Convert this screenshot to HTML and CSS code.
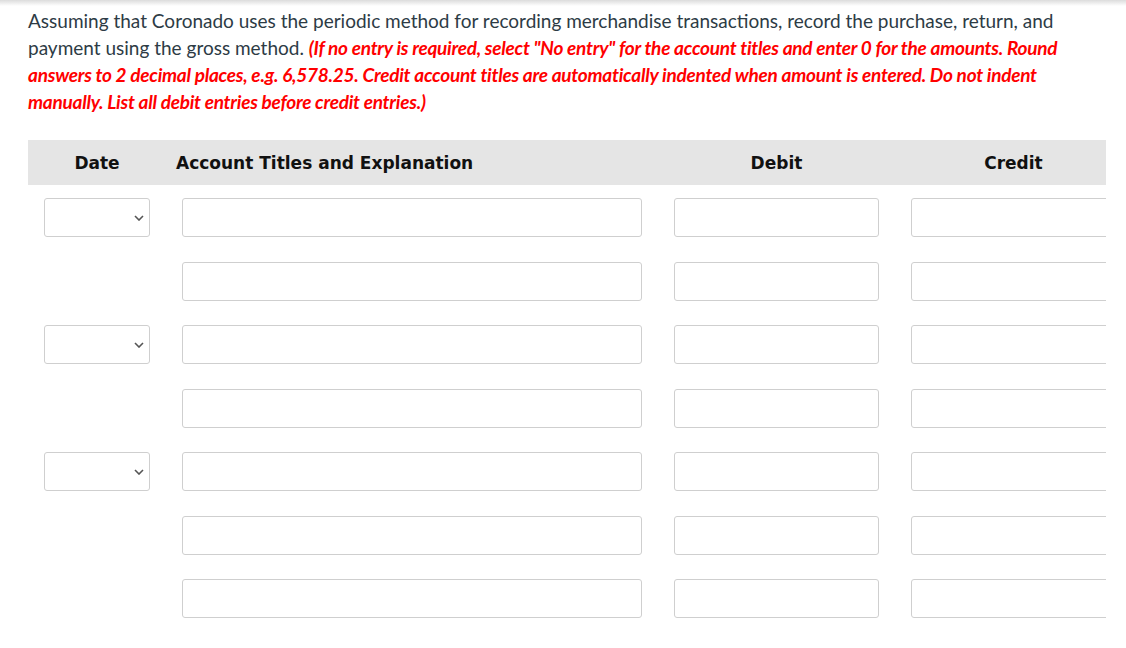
FILE: index.html
```html
<!DOCTYPE html>
<html>
<head>
<meta charset="utf-8">
<link rel="stylesheet" href="styles.css">
</head>
<body>
<div class="topshade"></div>
<div class="page">
  <p class="question">Assuming that Coronado uses the periodic method for recording merchandise transactions, record the purchase, return, and<br>payment using the gross method. <span class="note">(If no entry is required, select "No entry" for the account titles and enter 0 for the amounts. Round<br>answers to 2 decimal places, e.g. 6,578.25. Credit account titles are automatically indented when amount is entered. Do not indent<br>manually. List all debit entries before credit entries.)</span></p>
  <div class="tablewrap">
    <div class="table">
      <div class="row head">
        <div class="c date">Date</div>
        <div class="c acct">Account Titles and Explanation</div>
        <div class="c amt">Debit</div>
        <div class="c amt">Credit</div>
      </div>
      <div class="row">
        <div class="c date"><div class="sel"><svg class="chev" viewBox="0 0 10 6"><path d="M1 1 L5 5 L9 1" fill="none" stroke="#555" stroke-width="1.6"/></svg></div></div>
        <div class="c acct"><div class="inp"></div></div>
        <div class="c amt"><div class="inp"></div></div>
        <div class="c amt"><div class="inp"></div></div>
      </div>
      <div class="row">
        <div class="c date"></div>
        <div class="c acct"><div class="inp"></div></div>
        <div class="c amt"><div class="inp"></div></div>
        <div class="c amt"><div class="inp"></div></div>
      </div>
      <div class="row">
        <div class="c date"><div class="sel"><svg class="chev" viewBox="0 0 10 6"><path d="M1 1 L5 5 L9 1" fill="none" stroke="#555" stroke-width="1.6"/></svg></div></div>
        <div class="c acct"><div class="inp"></div></div>
        <div class="c amt"><div class="inp"></div></div>
        <div class="c amt"><div class="inp"></div></div>
      </div>
      <div class="row">
        <div class="c date"></div>
        <div class="c acct"><div class="inp"></div></div>
        <div class="c amt"><div class="inp"></div></div>
        <div class="c amt"><div class="inp"></div></div>
      </div>
      <div class="row">
        <div class="c date"><div class="sel"><svg class="chev" viewBox="0 0 10 6"><path d="M1 1 L5 5 L9 1" fill="none" stroke="#555" stroke-width="1.6"/></svg></div></div>
        <div class="c acct"><div class="inp"></div></div>
        <div class="c amt"><div class="inp"></div></div>
        <div class="c amt"><div class="inp"></div></div>
      </div>
      <div class="row">
        <div class="c date"></div>
        <div class="c acct"><div class="inp"></div></div>
        <div class="c amt"><div class="inp"></div></div>
        <div class="c amt"><div class="inp"></div></div>
      </div>
      <div class="row">
        <div class="c date"></div>
        <div class="c acct"><div class="inp"></div></div>
        <div class="c amt"><div class="inp"></div></div>
        <div class="c amt"><div class="inp"></div></div>
      </div>
    </div>
  </div>
</div>
</body>
</html>
```
FILE: styles.css
```css
html, body {
  margin: 0;
  padding: 0;
  background: #fff;
}
.topshade {
  height: 6px;
  background: linear-gradient(#dcdcdc, #ffffff);
}
.page {
  padding: 0 20px 0 28px;
}
.question {
  margin: 0;
  padding-top: 1px;
  font-family: Lato, "Liberation Sans", sans-serif;
  font-size: 19px;
  line-height: 27px;
  color: #2d3b45;
  white-space: nowrap;
}
.note {
  color: #ff0000;
  font-weight: bold;
  font-style: italic;
  letter-spacing: -0.25px;
}
.tablewrap {
  margin-top: 25px;
  width: 1078px;
  overflow: hidden;
}
.table {
  width: 1105px;
}
.row {
  display: flex;
  height: 63.5px;
}
.row.head {
  height: 45px;
  align-items: center;
  background: #e5e5e5;
  font-family: "DejaVu Sans", Verdana, sans-serif;
  font-weight: bold;
  font-size: 17px;
  color: #111;
  margin-bottom: 2px;
}
.row:not(.head) {
  align-items: flex-start;
  padding-top: 11px;
  box-sizing: border-box;
}
.c {
  box-sizing: border-box;
  padding: 0 16px;
}
.c.date {
  width: 138px;
  text-align: center;
}
.c.acct {
  width: 492px;
}
.head .c.acct {
  padding-left: 10px;
}
.c.amt {
  width: 237px;
  text-align: center;
}
.inp, .sel {
  height: 39px;
  box-sizing: border-box;
  border: 1px solid #cfcfcf;
  border-radius: 3px;
  background: #fff;
}
.sel {
  display: flex;
  align-items: center;
  justify-content: flex-end;
  padding-right: 5px;
}
.chev {
  width: 10px;
  height: 6px;
}
```
